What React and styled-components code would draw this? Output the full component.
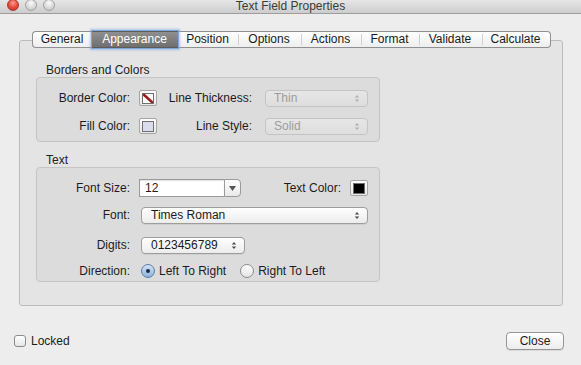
import React from 'react';
import styled, { createGlobalStyle } from 'styled-components';

const GlobalStyle = createGlobalStyle`
  html, body {
    margin: 0;
    padding: 0;
    background: #ededed;
  }
  body {
    font-family: "Liberation Sans", Arial, sans-serif;
  }
`;

const Window = styled.div`
  width: 581px;
  height: 365px;
  display: flex;
  flex-direction: column;
  background: #ededed;
  overflow: hidden;
  font-size: 12px;
  color: #1c1c1c;
`;

const TitleBar = styled.div`
  flex: none;
  height: 13px;
  display: grid;
  grid-template-columns: 1fr auto 1fr;
  background: linear-gradient(#e6e6e6, #cdcdcd);
  border-bottom: 1px solid #9d9d9d;
`;

const Lights = styled.div`
  display: flex;
  gap: 6px;
  padding-left: 7px;
  margin-top: -1px;
`;

const Light = styled.span`
  width: 12px;
  height: 12px;
  box-sizing: border-box;
  border-radius: 50%;
  border: 1px solid ${(p) => (p.$red ? '#a8372e' : '#a3a3a3')};
  background: ${(p) =>
    p.$red
      ? 'radial-gradient(circle at 50% 30%, #ff9a8c, #e5473c 55%, #b9322a)'
      : 'radial-gradient(circle at 50% 30%, #fbfbfb, #dadada 55%, #bcbcbc)'};
`;

const Title = styled.div`
  line-height: 13px;
  font-size: 12px;
  color: #3a3a3a;
`;

const Main = styled.div`
  padding: 17px 18px 0 19px;
  display: flex;
  flex-direction: column;
`;

const TabBar = styled.div`
  position: relative;
  z-index: 1;
  display: flex;
  justify-content: center;
  height: 17px;
  margin-bottom: -8px;
`;

const Tab = styled.div`
  position: relative;
  box-sizing: border-box;
  width: ${(p) => p.$w}px;
  height: 17px;
  line-height: 15px;
  text-align: center;
  border-top: 1px solid #8f8f8f;
  border-bottom: 1px solid #8f8f8f;
  border-left: ${(p) => (p.$first ? '1px solid #8f8f8f' : 'none')};
  border-right: ${(p) => (p.$last ? '1px solid #8f8f8f' : 'none')};
  border-radius: ${(p) => (p.$first ? '4px 0 0 4px' : p.$last ? '0 4px 4px 0' : '0')};
  background: linear-gradient(#ffffff, #eeeeee);
  color: #1a1a1a;

  &::before {
    content: '';
    display: ${(p) => (p.$sep ? 'block' : 'none')};
    position: absolute;
    left: 0;
    top: 2px;
    bottom: 2px;
    width: 1px;
    background: #cfcfcf;
  }

  ${(p) =>
    p.$active &&
    `
    z-index: 1;
    color: #fff;
    border-color: #5c5c5c;
    background: linear-gradient(#8f8f8f, #6f6f6f);
    box-shadow: 0 0 0 1px #7fa7d8, 0 0 2px 2px rgba(110, 160, 225, 0.55);
  `}
`;

const Panel = styled.div`
  box-sizing: border-box;
  height: 266px;
  border: 1px solid #bcbcbc;
  border-radius: 3px;
  background: #e4e4e4;
  padding: 22px 16px 0 16px;
`;

const Group = styled.div`
  width: 344px;
  margin-top: ${(p) => p.$mt || 0}px;
`;

const GroupTitle = styled.div`
  line-height: 14px;
  padding-left: 10px;
  color: #222;
`;

const GroupBox = styled.div`
  border: 1px solid #c5c5c5;
  border-radius: 4px;
  background: #dcdcdc;
  padding: 10px 0 ${(p) => p.$pb}px 0;
`;

const Row = styled.div`
  display: flex;
  align-items: center;
  height: ${(p) => p.$h || 20}px;
  margin-top: ${(p) => p.$mt || 0}px;
`;

const Label = styled.div`
  flex: none;
  box-sizing: border-box;
  width: ${(p) => p.$w}px;
  padding-right: ${(p) => p.$pr || 9}px;
  text-align: right;
  white-space: nowrap;
  color: #1c1c1c;
`;

const Swatch = styled.div`
  flex: none;
  box-sizing: border-box;
  width: 18px;
  height: 16px;
  border: 1px solid #a5a5a5;
  border-radius: 2px;
  background: linear-gradient(#ffffff, #e8e8e8);
  display: flex;
  align-items: center;
  justify-content: center;
`;

const SwatchInner = styled.div`
  box-sizing: border-box;
  width: 12px;
  height: 11px;
  border: 1px solid #6f6f6f;
  background: ${(p) => p.$color};
  display: flex;
  overflow: hidden;
`;

const Select = styled.div`
  flex: none;
  box-sizing: border-box;
  width: ${(p) => p.$w}px;
  height: 17px;
  margin-left: ${(p) => p.$ml || 0}px;
  padding: 0 7px 0 ${(p) => (p.$disabled ? 8 : 9)}px;
  display: flex;
  align-items: center;
  justify-content: space-between;
  border: 1px solid ${(p) => (p.$disabled ? '#c4c4c4' : '#9d9d9d')};
  border-radius: 4px;
  background: ${(p) =>
    p.$disabled ? 'linear-gradient(#e6e6e6, #dedede)' : 'linear-gradient(#ffffff, #ececec)'};
  color: ${(p) => (p.$disabled ? '#9d9d9d' : '#1a1a1a')};
  box-shadow: ${(p) => (p.$disabled ? 'none' : '0 1px 0 rgba(0,0,0,0.06)')};
`;

const Combo = styled.div`
  flex: none;
  display: flex;
  width: 102px;
  height: 18px;
`;

const ComboField = styled.div`
  flex: 1;
  box-sizing: border-box;
  padding-left: 5px;
  line-height: 16px;
  background: #fff;
  border: 1px solid #9a9a9a;
  border-right: none;
  box-shadow: inset 0 1px 1px rgba(0, 0, 0, 0.12);
`;

const ComboButton = styled.div`
  flex: none;
  box-sizing: border-box;
  width: 17px;
  border: 1px solid #9a9a9a;
  border-radius: 0 4px 4px 0;
  background: linear-gradient(#ffffff, #e9e9e9);
  display: flex;
  align-items: center;
  justify-content: center;
`;

const Spacer = styled.div`
  flex: 1;
`;

const Radio = styled.span`
  flex: none;
  box-sizing: border-box;
  width: 14px;
  height: 14px;
  margin-left: ${(p) => p.$ml || 0}px;
  border-radius: 50%;
  border: 1px solid ${(p) => (p.$on ? '#5b7ca8' : '#8c8c8c')};
  background: ${(p) =>
    p.$on ? 'linear-gradient(#d3e3f5, #8eb2dc)' : 'linear-gradient(#ffffff, #e4e4e4)'};
  display: flex;
  align-items: center;
  justify-content: center;

  &::after {
    content: '';
    display: ${(p) => (p.$on ? 'block' : 'none')};
    width: 4px;
    height: 4px;
    border-radius: 50%;
    background: #1b2b45;
  }
`;

const OptionText = styled.span`
  margin-left: 4px;
  white-space: nowrap;
`;

const Footer = styled.div`
  flex: 1;
  display: flex;
  align-items: center;
  justify-content: space-between;
  padding: 10px 17px 0 14px;
`;

const CheckWrap = styled.label`
  display: flex;
  align-items: center;
`;

const Checkbox = styled.span`
  box-sizing: border-box;
  width: 12px;
  height: 12px;
  border: 1px solid #8b8b8b;
  border-radius: 3px;
  background: linear-gradient(#ffffff, #e6e6e6);
`;

const CheckText = styled.span`
  margin-left: 5px;
`;

const Button = styled.button`
  box-sizing: border-box;
  width: 58px;
  height: 18px;
  padding: 0;
  border: 1px solid #959595;
  border-radius: 4px;
  background: linear-gradient(#ffffff, #ececec);
  box-shadow: 0 1px 0 rgba(0, 0, 0, 0.08);
  font-family: inherit;
  font-size: 12px;
  color: #1a1a1a;
`;

const UpDown = ({ dim }) => (
  <svg width="6" height="9" viewBox="0 0 6 9">
    <path d="M0.8 3.6 L3 1 L5.2 3.6 Z M0.8 5.4 L3 8 L5.2 5.4 Z" fill={dim ? '#b0b0b0' : '#4d4d4d'} />
  </svg>
);

const DownTriangle = () => (
  <svg width="7" height="5" viewBox="0 0 7 5">
    <path d="M0 0 H7 L3.5 5 Z" fill="#555" />
  </svg>
);

const NoColor = () => (
  <svg width="10" height="9" viewBox="0 0 10 9">
    <line x1="0" y1="0" x2="10" y2="9" stroke="#9b1c1c" strokeWidth="2.6" />
  </svg>
);

const tabs = [
  { name: 'General', w: 60 },
  { name: 'Appearance', w: 86 },
  { name: 'Position', w: 60 },
  { name: 'Options', w: 63 },
  { name: 'Actions', w: 60 },
  { name: 'Format', w: 58 },
  { name: 'Validate', w: 63 },
  { name: 'Calculate', w: 69 },
];
const activeTab = 1;

export default function App() {
  return (
    <>
      <GlobalStyle />
      <Window>
        <TitleBar>
          <Lights>
            <Light $red />
            <Light />
            <Light />
          </Lights>
          <Title>Text Field Properties</Title>
          <div />
        </TitleBar>
        <Main>
          <TabBar>
            {tabs.map((t, i) => (
              <Tab
                key={t.name}
                $w={t.w}
                $first={i === 0}
                $last={i === tabs.length - 1}
                $active={i === activeTab}
                $sep={i > 0 && i !== activeTab && i !== activeTab + 1}
              >
                {t.name}
              </Tab>
            ))}
          </TabBar>
          <Panel>
            <Group>
              <GroupTitle>Borders and Colors</GroupTitle>
              <GroupBox $pb={5}>
                <Row>
                  <Label $w={102}>Border Color:</Label>
                  <Swatch>
                    <SwatchInner $color="#fff">
                      <NoColor />
                    </SwatchInner>
                  </Swatch>
                  <Label $w={108} $pr={13}>Line Thickness:</Label>
                  <Select $w={103} $disabled>
                    <span>Thin</span>
                    <UpDown dim />
                  </Select>
                </Row>
                <Row $mt={8}>
                  <Label $w={102}>Fill Color:</Label>
                  <Swatch>
                    <SwatchInner $color="#dcdcef" />
                  </Swatch>
                  <Label $w={108} $pr={13}>Line Style:</Label>
                  <Select $w={103} $disabled>
                    <span>Solid</span>
                    <UpDown dim />
                  </Select>
                </Row>
              </GroupBox>
            </Group>
            <Group $mt={11}>
              <GroupTitle>Text</GroupTitle>
              <GroupBox $pb={1}>
                <Row>
                  <Label $w={102}>Font Size:</Label>
                  <Combo>
                    <ComboField>12</ComboField>
                    <ComboButton>
                      <DownTriangle />
                    </ComboButton>
                  </Combo>
                  <Label $w={109}>Text Color:</Label>
                  <Swatch>
                    <SwatchInner $color="#000" />
                  </Swatch>
                  <Spacer />
                </Row>
                <Row $mt={7}>
                  <Label $w={102}>Font:</Label>
                  <Select $w={227} $ml={2}>
                    <span>Times Roman</span>
                    <UpDown />
                  </Select>
                </Row>
                <Row $mt={10}>
                  <Label $w={102}>Digits:</Label>
                  <Select $w={104} $ml={2}>
                    <span>0123456789</span>
                    <UpDown />
                  </Select>
                </Row>
                <Row $mt={7} $h={18}>
                  <Label $w={102}>Direction:</Label>
                  <Radio $on $ml={2} />
                  <OptionText>Left To Right</OptionText>
                  <Radio $ml={14} />
                  <OptionText>Right To Left</OptionText>
                </Row>
              </GroupBox>
            </Group>
          </Panel>
        </Main>
        <Footer>
          <CheckWrap>
            <Checkbox />
            <CheckText>Locked</CheckText>
          </CheckWrap>
          <Button>Close</Button>
        </Footer>
      </Window>
    </>
  );
}
